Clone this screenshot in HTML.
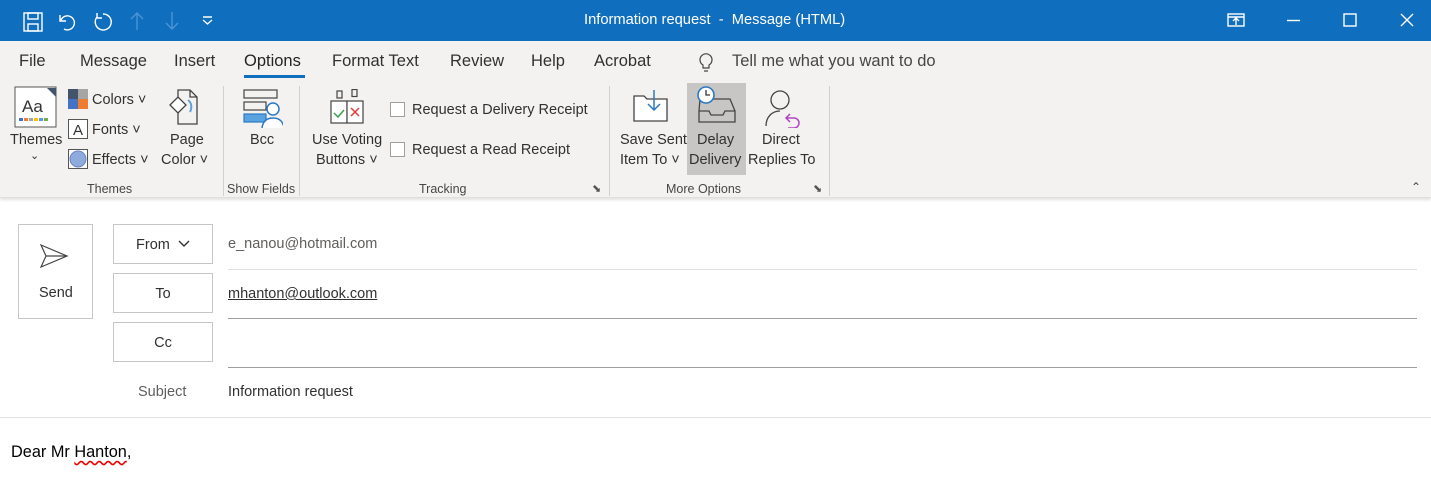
<!DOCTYPE html>
<html><head><meta charset="utf-8"><style>
*{margin:0;padding:0;box-sizing:border-box}
body{width:1431px;height:485px;overflow:hidden;background:#fff;font-family:"Liberation Sans",sans-serif;color:#252423;position:relative}
.a{position:absolute;white-space:nowrap}
#tb{left:0;top:0;width:1431px;height:41px;background:#106ebe}
#tabs{left:0;top:41px;width:1431px;height:40px;background:#f3f2f1}
#rib{left:0;top:81px;width:1431px;height:117px;background:#f3f2f1;border-bottom:1px solid #e1dfdd;box-shadow:0 2px 3px rgba(0,0,0,.12)}
.tab{font-size:16.5px;top:52px;color:#323130}
.r{font-size:14.5px;color:#323130}
.g{font-size:12.5px;color:#484644;top:182px}
.sep{width:1px;background:#d2d0ce;top:86px;height:110px}
.btn{border:1px solid #c8c6c4;background:#fff;font-size:14.5px;color:#323130;text-align:center}
.cb{width:15px;height:15px;border:1px solid #a19f9d;background:#fff}
.line{height:1px;background:#d2d0ce}
</style></head><body>
<div class="a" id="tb"></div>
<svg class="a" style="left:0;top:0" width="1431" height="41" fill="none" stroke="#fff" stroke-width="1.4">
<rect x="24" y="13" width="18" height="18"/><rect x="28" y="13" width="10" height="6"/><rect x="28" y="24" width="10" height="7"/>
<path d="M60 15v6h6M61 20a7 7 0 1 1 3 9"/>
<path d="M103 14a8 8 0 1 1-6 3M97 13v5h5"/>
<path d="M137 30V13M131 19l6-6 6 6M172 12v17M166 23l6 6 6-6" stroke="#4d94d3"/>
<path d="M203 17h9M203 20l4.5 4 4.5-4"/>
<rect x="1228" y="14" width="16" height="12"/><path d="M1228 17h16M1236 25v-6M1233 21l3-3 3 3"/>
<path d="M1287 20.5h13"/><rect x="1344" y="14" width="12" height="12"/><path d="M1401 14l12 12M1413 14l-12 12"/>
</svg>
<div class="a" style="left:584px;top:12px;color:#fff;font-size:14.7px">Information request&nbsp; -&nbsp; Message (HTML)</div>
<div class="a" id="tabs"></div>
<div class="a tab" style="left:19px">File</div>
<div class="a tab" style="left:80px">Message</div>
<div class="a tab" style="left:174px">Insert</div>
<div class="a tab" style="left:244px;color:#252423">Options</div>
<div class="a" style="left:244px;top:75px;width:61px;height:3px;background:#106ebe"></div>
<div class="a tab" style="left:332px">Format Text</div>
<div class="a tab" style="left:450px">Review</div>
<div class="a tab" style="left:531px">Help</div>
<div class="a tab" style="left:594px">Acrobat</div>
<svg class="a" style="left:695px;top:50px" width="24" height="24" fill="none" stroke="#444" stroke-width="1.2"><path d="M8 15a6 6 0 1 1 6 0v3H8z M9 21h4"/></svg>
<div class="a tab" style="left:732px;color:#484644">Tell me what you want to do</div>
<div class="a" id="rib"></div>
<svg class="a" style="left:14px;top:86px" width="44" height="44"><rect x="1" y="1" width="41" height="40" fill="#fff" stroke="#555"/><path d="M33 2h9v9z" fill="#44546a"/><text x="8" y="26" font-size="17" font-family="Liberation Sans" fill="#333">Aa</text><g><rect x="5" y="32" width="4" height="3" fill="#4472c4"/><rect x="10" y="32" width="4" height="3" fill="#ed7d31"/><rect x="15" y="32" width="4" height="3" fill="#a5a5a5"/><rect x="20" y="32" width="4" height="3" fill="#ffc000"/><rect x="25" y="32" width="4" height="3" fill="#5b9bd5"/><rect x="30" y="32" width="4" height="3" fill="#70ad47"/></g></svg>
<div class="a r" style="left:10px;top:132px">Themes</div>
<div class="a r" style="left:30px;top:149px;font-size:11px">⌄</div>
<svg class="a" style="left:68px;top:89px" width="20" height="80"><rect x="0" y="0" width="10" height="10" fill="#44546a"/><rect x="10" y="0" width="10" height="10" fill="#a5a5a5"/><rect x="0" y="10" width="10" height="10" fill="#4472c4"/><rect x="10" y="10" width="10" height="10" fill="#ed7d31"/><rect x="0.5" y="30.5" width="19" height="19" fill="#fff" stroke="#555"/><text x="5" y="46" font-size="15" font-family="Liberation Sans" fill="#333">A</text><rect x="0.5" y="60.5" width="19" height="19" fill="#fff" stroke="#555"/><circle cx="10" cy="70" r="8" fill="#8faadc" stroke="#6d86c0"/></svg>
<div class="a r" style="left:92px;top:92px">Colors ˅</div>
<div class="a r" style="left:92px;top:122px">Fonts ˅</div>
<div class="a r" style="left:92px;top:152px">Effects ˅</div>
<svg class="a" style="left:166px;top:88px" width="34" height="40" fill="none" stroke="#444" stroke-width="1.3"><path d="M12 2h12l7 7v27H12z M24 2v7h7"/><path d="M4 17l8-8 8 8-8 8z" fill="#fff"/><path d="M22 12c4 3 4 8 2 12" stroke="#5ba3e0" stroke-width="2"/></svg>
<div class="a r" style="left:170px;top:132px">Page</div>
<div class="a r" style="left:161px;top:152px">Color ˅</div>
<div class="a g" style="left:87px">Themes</div>
<div class="a sep" style="left:223px"></div>
<svg class="a" style="left:243px;top:88px" width="40" height="40" fill="none" stroke="#444" stroke-width="1.2"><rect x="1" y="2" width="33" height="8"/><rect x="1" y="14" width="22" height="8"/><rect x="1" y="26" width="22" height="8" fill="#5ba3e0" stroke="#2b79c2"/><circle cx="30" cy="21" r="6" fill="#fff" stroke="#2b79c2" stroke-width="1.5"/><path d="M19 40c1-7 5-10 11-10s10 3 11 10" fill="#fff" stroke="#2b79c2" stroke-width="1.5"/></svg>
<div class="a r" style="left:250px;top:132px">Bcc</div>
<div class="a g" style="left:227px">Show Fields</div>
<div class="a sep" style="left:299px"></div>
<svg class="a" style="left:330px;top:89px" width="36" height="36" fill="none" stroke="#444" stroke-width="1.2"><rect x="7" y="2" width="5" height="7"/><rect x="22" y="0.5" width="5" height="7"/><rect x="1" y="12" width="16" height="22" fill="#fff"/><rect x="17" y="12" width="16" height="22" fill="#fff"/><path d="M4 24l4 4 6-7" stroke="#3ca04b" stroke-width="1.5"/><path d="M21 19l8 8M29 19l-8 8" stroke="#e03a3a" stroke-width="1.5"/></svg>
<div class="a r" style="left:312px;top:132px">Use Voting</div>
<div class="a r" style="left:316px;top:152px">Buttons ˅</div>
<div class="a cb" style="left:390px;top:102px"></div>
<div class="a r" style="left:412px;top:102px">Request a Delivery Receipt</div>
<div class="a cb" style="left:390px;top:142px"></div>
<div class="a r" style="left:412px;top:142px">Request a Read Receipt</div>
<div class="a g" style="left:419px">Tracking</div>
<div class="a" style="left:592px;top:182px;font-size:11px;color:#555">⬊</div>
<div class="a sep" style="left:609px"></div>
<svg class="a" style="left:632px;top:88px" width="40" height="36" fill="none" stroke="#444" stroke-width="1.3"><path d="M2 8h10l3 3h20v22H2z" fill="#fff"/><path d="M22 2v20M16 16l6 6 6-6" stroke="#2b79c2" stroke-width="1.5"/></svg>
<div class="a r" style="left:620px;top:132px">Save Sent</div>
<div class="a r" style="left:620px;top:152px">Item To ˅</div>
<div class="a" style="left:687px;top:83px;width:59px;height:92px;background:#c8c6c4"></div>
<svg class="a" style="left:694px;top:85px" width="46" height="40" fill="none" stroke="#444" stroke-width="1.3"><path d="M6 14h30l5 12v11H5V26z"/><path d="M5 26h10l2 4h12l2-4h10"/><circle cx="12" cy="10" r="8" fill="#fff" stroke="#2b79c2" stroke-width="1.6"/><path d="M12 5v5h4" stroke="#333"/></svg>
<div class="a r" style="left:697px;top:132px">Delay</div>
<div class="a r" style="left:689px;top:152px">Delivery</div>
<svg class="a" style="left:762px;top:88px" width="40" height="40" fill="none" stroke="#444" stroke-width="1.3"><circle cx="18" cy="12" r="9"/><path d="M4 38c0-9 6-15 14-15"/><path d="M24 30h8a5 5 0 0 1 0 10h-6M28 26l-4 4 4 4" stroke="#b146c2" stroke-width="1.5"/></svg>
<div class="a r" style="left:762px;top:132px">Direct</div>
<div class="a r" style="left:748px;top:152px">Replies To</div>
<div class="a g" style="left:666px">More Options</div>
<div class="a" style="left:813px;top:182px;font-size:11px;color:#555">⬊</div>
<div class="a sep" style="left:829px"></div>
<div class="a" style="left:1411px;top:180px;font-size:12px;color:#444">⌃</div>
<div class="a btn" style="left:18px;top:224px;width:75px;height:95px"></div>
<svg class="a" style="left:38px;top:242px" width="32" height="28" fill="none" stroke="#444" stroke-width="1.2"><path d="M3 3l26 11L3 25l5-11z M8 14h21"/></svg>
<div class="a r" style="left:39px;top:285px">Send</div>
<div class="a btn" style="left:113px;top:224px;width:100px;height:40px;line-height:40px">From &nbsp;<svg width="12" height="8" style="vertical-align:1px"><path d="M1 1l5 5 5-5" fill="none" stroke="#333" stroke-width="1.4"/></svg></div>
<div class="a btn" style="left:113px;top:273px;width:100px;height:40px;line-height:40px">To</div>
<div class="a btn" style="left:113px;top:322px;width:100px;height:40px;line-height:40px">Cc</div>
<div class="a r" style="left:228px;top:236px;color:#605e5c">e_nanou@hotmail.com</div>
<div class="a line" style="left:228px;top:269px;width:1189px;background:#e1dfdd"></div>
<div class="a r" style="left:228px;top:286px;text-decoration:underline">mhanton@outlook.com</div>
<div class="a line" style="left:228px;top:318px;width:1189px;background:#a19f9d"></div>
<div class="a line" style="left:228px;top:367px;width:1189px;background:#a19f9d"></div>
<div class="a r" style="left:138px;top:384px;color:#605e5c">Subject</div>
<div class="a r" style="left:228px;top:384px">Information request</div>
<div class="a line" style="left:0;top:417px;width:1431px;background:#e1dfdd"></div>
<div class="a" style="left:11px;top:443px;font-size:16.3px;color:#000">Dear Mr <span style="text-decoration:underline wavy #e00;text-underline-offset:3px">Hanton</span>,</div>
</body></html>
